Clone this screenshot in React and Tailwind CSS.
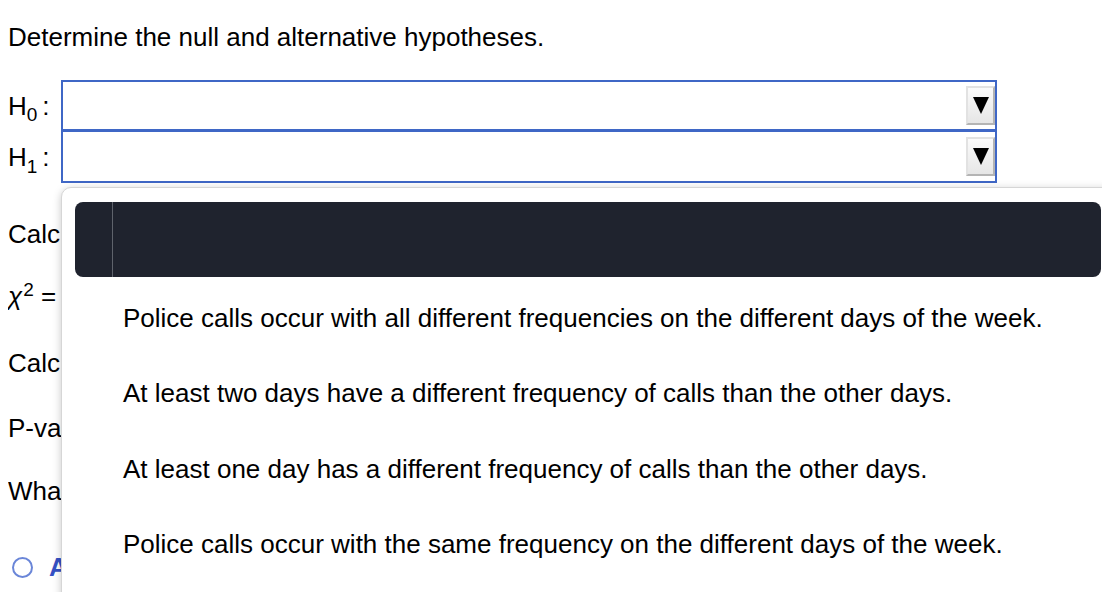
import React from 'react';

// Small black down-triangle used on the select buttons
const Triangle = () => (
  <svg width="16" height="17" viewBox="0 0 16 17">
    <polygon points="0,0 16,0 8,17" fill="#000" />
  </svg>
);

// Select box with bevelled dropdown button at the right
const SelectBox = ({ className }) => (
  <div className={`flex items-center justify-end bg-white border-[#3f67c6] ${className}`}>
    <div className="w-[29px] h-[39px] flex items-center justify-center border-2 border-t-[#e2e2e2] border-l-[#e2e2e2] border-r-[#b4b4b4] border-b-[#b4b4b4] bg-gradient-to-b from-[#fbfbfb] to-[#e6e6e6]">
      <Triangle />
    </div>
  </div>
);

const options = [
  'Police calls occur with all different frequencies on the different days of the week.',
  'At least two days have a different frequency of calls than the other days.',
  'At least one day has a different frequency of calls than the other days.',
  'Police calls occur with the same frequency on the different days of the week.',
];

// rows of the question that sit under the open menu, only their start shows
const Hidden = ({ className, children }) => (
  <div className={`w-[53px] h-[30px] overflow-hidden whitespace-nowrap ${className}`}>{children}</div>
);

const App = () => {
  return (
    <div
      className="relative w-[1102px] h-[592px] overflow-hidden bg-white text-black text-[26px] leading-[30px]"
      style={{ fontFamily: '"Liberation Sans", Arial, sans-serif' }}
    >
      <div className="pl-[8px] pt-[22px]">
        <div>Determine the null and alternative hypotheses.</div>

        {/* hypothesis rows */}
        <div className="mt-[28px] flex flex-col">
          <div className="flex items-center h-[51px]">
            <div className="w-[53px]">
              H<sub className="text-[19px] align-[-2px]">0</sub>
              <span className="ml-[5px]">:</span>
            </div>
            <SelectBox className="w-[936px] h-[51px] border-2" />
          </div>
          <div className="flex items-center h-[52px]">
            <div className="w-[53px]">
              H<sub className="text-[19px] align-[-2px]">1</sub>
              <span className="ml-[5px]">:</span>
            </div>
            <SelectBox className="w-[936px] h-[52px] border-2 border-t" />
          </div>
        </div>

        {/* rest of the question, mostly hidden by the open menu */}
        <Hidden className="mt-[36px]">Calculate the test statistic.</Hidden>
        <Hidden className="mt-[32px]">
          <span className="italic">χ</span>
          <sup className="text-[19px] ml-[1px]">2</sup> =
        </Hidden>
        <Hidden className="mt-[37px]">Calculate the P-value.</Hidden>
        <Hidden className="mt-[35px]">P-value =</Hidden>
        <Hidden className="mt-[33px]">What is the conclusion?</Hidden>
        <Hidden className="mt-[46px] flex items-center gap-[16px] pl-[4px]">
          <span className="shrink-0 w-[21px] h-[21px] rounded-full border-2 border-[#6a86d8]" />
          <span className="font-bold text-[#3550c4]">A.</span>
        </Hidden>
      </div>

      {/* open dropdown menu */}
      <div className="absolute left-[61px] top-[187px] w-[1054px] h-[420px] bg-white rounded-[10px] border border-[#d6d6d6] shadow-[0_2px_8px_rgba(0,0,0,0.22)]">
        <div className="mx-[13px] mt-[14px] h-[75px] rounded-[8px] bg-[#1f232e] flex">
          <div className="w-[38px] h-full border-r border-[#5f636c]" />
        </div>
        <div className="mt-[3px] flex flex-col">
          {options.map((opt) => (
            <div key={opt} className="h-[75.5px] flex items-center pl-[61px]">
              {opt}
            </div>
          ))}
        </div>
      </div>
    </div>
  );
};

export default App;
